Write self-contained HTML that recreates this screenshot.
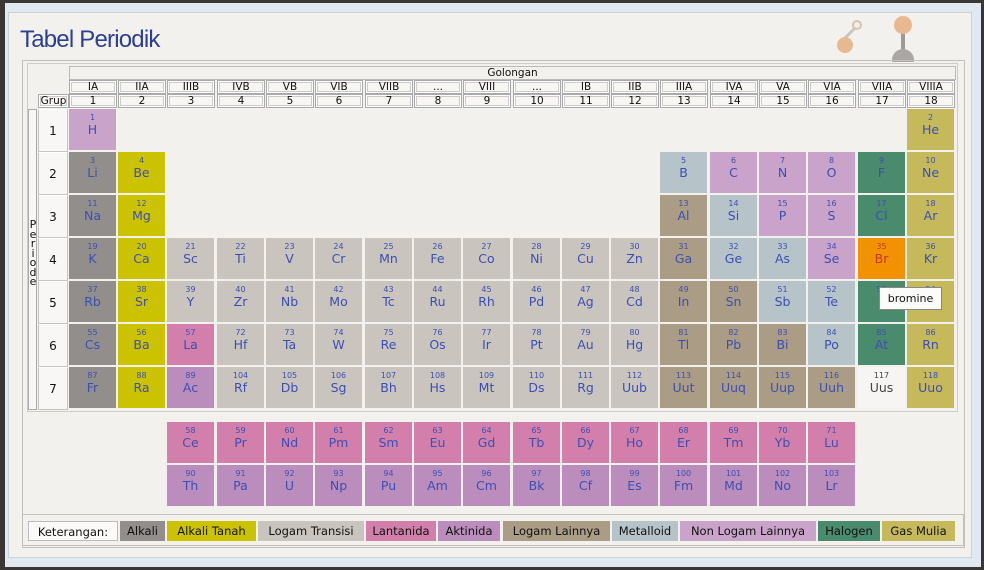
<!DOCTYPE html>
<html><head><meta charset="utf-8"><style>
*{margin:0;padding:0;box-sizing:border-box}
body{width:984px;height:570px;background:#3a3634;position:relative;overflow:hidden;font-family:"DejaVu Sans","Liberation Sans",sans-serif}
.win{position:absolute;left:5px;top:3px;width:976px;height:564px;background:#dfe9ef}
.pg{position:absolute;left:8px;top:12px;width:964px;height:546px;background:#f2f1ee;border:1px solid #c8d4dc}
.a{position:absolute}
.title{left:20px;top:26px;font-family:"Liberation Sans",sans-serif;font-size:24px;color:#2e3f8f;letter-spacing:-0.8px}
.box{border:1px solid #bdbab5}
.h{position:absolute;height:14px;font-size:10.5px;line-height:12px;text-align:center;color:#111;border:1px solid #aaa;box-shadow:inset 0 0 0 1px #fff,inset 0 0 0 2px #ccc;background:#f7f6f3;width:48px}
.e{position:absolute;width:47px;height:41px;text-align:center;font-size:8px;line-height:9px;padding-top:4px;color:#3c4fb5}
.e b{display:block;font-weight:normal;font-size:12.5px;line-height:15px;margin-top:0px}
.c1{left:69px}.c2{left:118px}.c3{left:167px}.c4{left:217px}.c5{left:266px}.c6{left:315px}.c7{left:365px}.c8{left:414px}.c9{left:463px}.c10{left:513px}.c11{left:562px}.c12{left:611px}.c13{left:660px}.c14{left:710px}.c15{left:759px}.c16{left:808px}.c17{left:858px}.c18{left:907px}
.r1{top:109px}.r2{top:152px}.r3{top:195px}.r4{top:238px}.r5{top:281px}.r6{top:324px}.r7{top:367px}.r8{top:422px}.r9{top:465px}
.ak{background:#928e8b}.at{background:#cbc200}.tr{background:#c9c4be}.la{background:#d280ab}.ac{background:#bb8dbd}.ll{background:#ab9c86}.me{background:#b6c4c9}.nl{background:#c9a3c9}.ha{background:#4b8b6d}.gm{background:#c5b95b}.un{background:#f6f5f3}.br{background:#f39200;color:#c0392b}
.pn{position:absolute;left:38px;width:30px;height:43px;font-size:12px;line-height:43px;text-align:center;color:#111;background:#f8f7f5;border:1px solid #c8c5c0;border-top:1px solid #fff}
.lg{position:absolute;top:521px;height:20px;font-size:11.5px;line-height:20px;text-align:center;color:#111}
</style></head><body>
<div class="win"></div>
<div class="pg"></div>
<div class="a title">Tabel Periodik</div>
<svg class="a" style="left:825px;top:12px" width="150" height="50">
<line x1="19" y1="27" x2="32" y2="14" stroke="#c9c6c1" stroke-width="3"/>
<circle cx="20" cy="33" r="8" fill="#e8b98f"/><circle cx="32" cy="13" r="4" fill="#f0efec" stroke="#d8c3ad" stroke-width="2"/>
<line x1="78" y1="14" x2="78" y2="40" stroke="#9c9996" stroke-width="4"/>
<circle cx="78" cy="13" r="9" fill="#e8b98f"/><circle cx="78" cy="48" r="11" fill="#aaa7a4"/>
</svg>
<div class="a box" style="left:22px;top:60px;width:943px;height:488px;border-color:#c3c0bb"></div>
<div class="a box" style="left:27px;top:63px;width:931px;height:349px;border-color:#cfccc7"></div>
<div class="a box" style="left:69px;top:66px;width:887px;height:14px;font-size:10.5px;line-height:12px;text-align:center;color:#111">Golongan</div>
<div class="h c1" style="top:80px">IA</div><div class="h c2" style="top:80px">IIA</div><div class="h c3" style="top:80px">IIIB</div><div class="h c4" style="top:80px">IVB</div><div class="h c5" style="top:80px">VB</div><div class="h c6" style="top:80px">VIB</div><div class="h c7" style="top:80px">VIIB</div><div class="h c8" style="top:80px">...</div><div class="h c9" style="top:80px">VIII</div><div class="h c10" style="top:80px">...</div><div class="h c11" style="top:80px">IB</div><div class="h c12" style="top:80px">IIB</div><div class="h c13" style="top:80px">IIIA</div><div class="h c14" style="top:80px">IVA</div><div class="h c15" style="top:80px">VA</div><div class="h c16" style="top:80px">VIA</div><div class="h c17" style="top:80px">VIIA</div><div class="h c18" style="top:80px">VIIIA</div>
<div class="h" style="top:94px;left:38px;width:31px">Grup</div>
<div class="h c1" style="top:94px">1</div><div class="h c2" style="top:94px">2</div><div class="h c3" style="top:94px">3</div><div class="h c4" style="top:94px">4</div><div class="h c5" style="top:94px">5</div><div class="h c6" style="top:94px">6</div><div class="h c7" style="top:94px">7</div><div class="h c8" style="top:94px">8</div><div class="h c9" style="top:94px">9</div><div class="h c10" style="top:94px">10</div><div class="h c11" style="top:94px">11</div><div class="h c12" style="top:94px">12</div><div class="h c13" style="top:94px">13</div><div class="h c14" style="top:94px">14</div><div class="h c15" style="top:94px">15</div><div class="h c16" style="top:94px">16</div><div class="h c17" style="top:94px">17</div><div class="h c18" style="top:94px">18</div>
<div class="a box" style="left:28px;top:109px;width:9px;height:301px;border-color:#aaa;background:#f8f7f5"></div>
<div class="a" style="left:28px;top:220px;width:10px;font-size:11px;line-height:9.5px;text-align:center;color:#111">P<br>e<br>r<br>i<br>o<br>d<br>e</div>
<div class="pn r1">1</div><div class="pn r2">2</div><div class="pn r3">3</div><div class="pn r4">4</div><div class="pn r5">5</div><div class="pn r6">6</div><div class="pn r7">7</div>

<div class="e c1 r1 nl">1<b>H</b></div><div class="e c18 r1 gm">2<b>He</b></div>
<div class="e c1 r2 ak">3<b>Li</b></div><div class="e c2 r2 at">4<b>Be</b></div><div class="e c13 r2 me">5<b>B</b></div><div class="e c14 r2 nl">6<b>C</b></div><div class="e c15 r2 nl">7<b>N</b></div><div class="e c16 r2 nl">8<b>O</b></div><div class="e c17 r2 ha">9<b>F</b></div><div class="e c18 r2 gm">10<b>Ne</b></div>
<div class="e c1 r3 ak">11<b>Na</b></div><div class="e c2 r3 at">12<b>Mg</b></div><div class="e c13 r3 ll">13<b>Al</b></div><div class="e c14 r3 me">14<b>Si</b></div><div class="e c15 r3 nl">15<b>P</b></div><div class="e c16 r3 nl">16<b>S</b></div><div class="e c17 r3 ha">17<b>Cl</b></div><div class="e c18 r3 gm">18<b>Ar</b></div>
<div class="e c1 r4 ak">19<b>K</b></div><div class="e c2 r4 at">20<b>Ca</b></div><div class="e c3 r4 tr">21<b>Sc</b></div><div class="e c4 r4 tr">22<b>Ti</b></div><div class="e c5 r4 tr">23<b>V</b></div><div class="e c6 r4 tr">24<b>Cr</b></div><div class="e c7 r4 tr">25<b>Mn</b></div><div class="e c8 r4 tr">26<b>Fe</b></div><div class="e c9 r4 tr">27<b>Co</b></div><div class="e c10 r4 tr">28<b>Ni</b></div><div class="e c11 r4 tr">29<b>Cu</b></div><div class="e c12 r4 tr">30<b>Zn</b></div><div class="e c13 r4 ll">31<b>Ga</b></div><div class="e c14 r4 me">32<b>Ge</b></div><div class="e c15 r4 me">33<b>As</b></div><div class="e c16 r4 nl">34<b>Se</b></div><div class="e c17 r4 br">35<b>Br</b></div><div class="e c18 r4 gm">36<b>Kr</b></div>
<div class="e c1 r5 ak">37<b>Rb</b></div><div class="e c2 r5 at">38<b>Sr</b></div><div class="e c3 r5 tr">39<b>Y</b></div><div class="e c4 r5 tr">40<b>Zr</b></div><div class="e c5 r5 tr">41<b>Nb</b></div><div class="e c6 r5 tr">42<b>Mo</b></div><div class="e c7 r5 tr">43<b>Tc</b></div><div class="e c8 r5 tr">44<b>Ru</b></div><div class="e c9 r5 tr">45<b>Rh</b></div><div class="e c10 r5 tr">46<b>Pd</b></div><div class="e c11 r5 tr">47<b>Ag</b></div><div class="e c12 r5 tr">48<b>Cd</b></div><div class="e c13 r5 ll">49<b>In</b></div><div class="e c14 r5 ll">50<b>Sn</b></div><div class="e c15 r5 me">51<b>Sb</b></div><div class="e c16 r5 me">52<b>Te</b></div><div class="e c17 r5 ha">53<b>I</b></div><div class="e c18 r5 gm">54<b>Xe</b></div>
<div class="e c1 r6 ak">55<b>Cs</b></div><div class="e c2 r6 at">56<b>Ba</b></div><div class="e c3 r6 la">57<b>La</b></div><div class="e c4 r6 tr">72<b>Hf</b></div><div class="e c5 r6 tr">73<b>Ta</b></div><div class="e c6 r6 tr">74<b>W</b></div><div class="e c7 r6 tr">75<b>Re</b></div><div class="e c8 r6 tr">76<b>Os</b></div><div class="e c9 r6 tr">77<b>Ir</b></div><div class="e c10 r6 tr">78<b>Pt</b></div><div class="e c11 r6 tr">79<b>Au</b></div><div class="e c12 r6 tr">80<b>Hg</b></div><div class="e c13 r6 ll">81<b>Tl</b></div><div class="e c14 r6 ll">82<b>Pb</b></div><div class="e c15 r6 ll">83<b>Bi</b></div><div class="e c16 r6 me">84<b>Po</b></div><div class="e c17 r6 ha">85<b>At</b></div><div class="e c18 r6 gm">86<b>Rn</b></div>
<div class="e c1 r7 ak">87<b>Fr</b></div><div class="e c2 r7 at">88<b>Ra</b></div><div class="e c3 r7 ac">89<b>Ac</b></div><div class="e c4 r7 tr">104<b>Rf</b></div><div class="e c5 r7 tr">105<b>Db</b></div><div class="e c6 r7 tr">106<b>Sg</b></div><div class="e c7 r7 tr">107<b>Bh</b></div><div class="e c8 r7 tr">108<b>Hs</b></div><div class="e c9 r7 tr">109<b>Mt</b></div><div class="e c10 r7 tr">110<b>Ds</b></div><div class="e c11 r7 tr">111<b>Rg</b></div><div class="e c12 r7 tr">112<b>Uub</b></div><div class="e c13 r7 ll">113<b>Uut</b></div><div class="e c14 r7 ll">114<b>Uuq</b></div><div class="e c15 r7 ll">115<b>Uup</b></div><div class="e c16 r7 ll">116<b>Uuh</b></div><div class="e c17 r7 un" style="color:#444">117<b>Uus</b></div><div class="e c18 r7 gm">118<b>Uuo</b></div>
<div class="e c3 r8 la">58<b>Ce</b></div><div class="e c4 r8 la">59<b>Pr</b></div><div class="e c5 r8 la">60<b>Nd</b></div><div class="e c6 r8 la">61<b>Pm</b></div><div class="e c7 r8 la">62<b>Sm</b></div><div class="e c8 r8 la">63<b>Eu</b></div><div class="e c9 r8 la">64<b>Gd</b></div><div class="e c10 r8 la">65<b>Tb</b></div><div class="e c11 r8 la">66<b>Dy</b></div><div class="e c12 r8 la">67<b>Ho</b></div><div class="e c13 r8 la">68<b>Er</b></div><div class="e c14 r8 la">69<b>Tm</b></div><div class="e c15 r8 la">70<b>Yb</b></div><div class="e c16 r8 la">71<b>Lu</b></div>
<div class="e c3 r9 ac">90<b>Th</b></div><div class="e c4 r9 ac">91<b>Pa</b></div><div class="e c5 r9 ac">92<b>U</b></div><div class="e c6 r9 ac">93<b>Np</b></div><div class="e c7 r9 ac">94<b>Pu</b></div><div class="e c8 r9 ac">95<b>Am</b></div><div class="e c9 r9 ac">96<b>Cm</b></div><div class="e c10 r9 ac">97<b>Bk</b></div><div class="e c11 r9 ac">98<b>Cf</b></div><div class="e c12 r9 ac">99<b>Es</b></div><div class="e c13 r9 ac">100<b>Fm</b></div><div class="e c14 r9 ac">101<b>Md</b></div><div class="e c15 r9 ac">102<b>No</b></div><div class="e c16 r9 ac">103<b>Lr</b></div>
<div class="a" style="left:879px;top:287px;width:63px;height:23px;background:#fbfbfa;border:1px solid #888;font-size:11px;line-height:21px;text-align:center;color:#111">bromine</div>

<div class="a box" style="left:22px;top:514px;width:942px;height:32px;border-color:#c3c0bb"></div>
<div class="lg" style="left:28px;width:90px;background:#fbfaf8;border:1px solid #bbb">Keterangan:</div>
<div class="lg ak" style="left:120px;width:45px">Alkali</div>
<div class="lg at" style="left:167px;width:89px">Alkali Tanah</div>
<div class="lg tr" style="left:258px;width:106px">Logam Transisi</div>
<div class="lg la" style="left:366px;width:70px">Lantanida</div>
<div class="lg ac" style="left:438px;width:62px">Aktinida</div>
<div class="lg ll" style="left:503px;width:107px">Logam Lainnya</div>
<div class="lg me" style="left:612px;width:66px">Metalloid</div>
<div class="lg nl" style="left:680px;width:136px">Non Logam Lainnya</div>
<div class="lg ha" style="left:818px;width:62px">Halogen</div>
<div class="lg gm" style="left:882px;width:73px">Gas Mulia</div>
</body></html>
